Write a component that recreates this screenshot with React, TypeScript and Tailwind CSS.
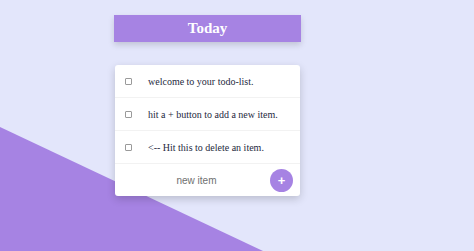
import React from 'react';

const items = [
  'welcome to your todo-list.',
  'hit a + button to add a new item.',
  '<-- Hit this to delete an item.',
];

export default function App() {
  return (
    <div className="relative w-[474px] h-[251px] overflow-hidden bg-[#e3e6fb]">
      {/* Diagonal background shape */}
      <svg className="absolute left-0 top-0" width="474" height="251" viewBox="0 0 474 251">
        <polygon points="0,127 263,251 0,251" fill="#a683e3" />
      </svg>

      <div className="relative flex flex-col items-start pl-[114px] pt-[15px]">
        {/* Header */}
        <div className="w-[187px] h-[27px] bg-[#a683e3] flex items-center justify-center shadow-[0_3px_6px_rgba(0,0,0,0.15)]">
          <h1 className="text-white font-bold text-[15px] font-['Liberation_Serif',serif]">Today</h1>
        </div>

        {/* Card */}
        <div className="mt-[23px] ml-px w-[185px] bg-white rounded-[3px] shadow-[0_3px_8px_rgba(0,0,0,0.18)] font-['Liberation_Serif',serif] text-[#262a40]">
          {items.map((text, i) => (
            <div key={i} className="flex items-center h-[33px] border-b border-[#f2f2f2] pl-[10px]">
              <input
                type="checkbox"
                className="appearance-none w-[7px] h-[7px] m-0 border border-[#9a9a9a] rounded-[1px] bg-white"
              />
              <span className="ml-[16px] text-[10px]">{text}</span>
            </div>
          ))}
          <div className="flex items-center h-[32px] pr-[7px]">
            <span className="flex-1 text-center pl-[8px] text-[10px] text-[#6f6f6f] font-['Liberation_Sans',sans-serif]">new item</span>
            <button className="w-[23px] h-[23px] rounded-full bg-[#a683e3] text-white flex items-center justify-center font-['Liberation_Sans',sans-serif] font-bold text-[13px] leading-none">
              +
            </button>
          </div>
        </div>
      </div>
    </div>
  );
}
